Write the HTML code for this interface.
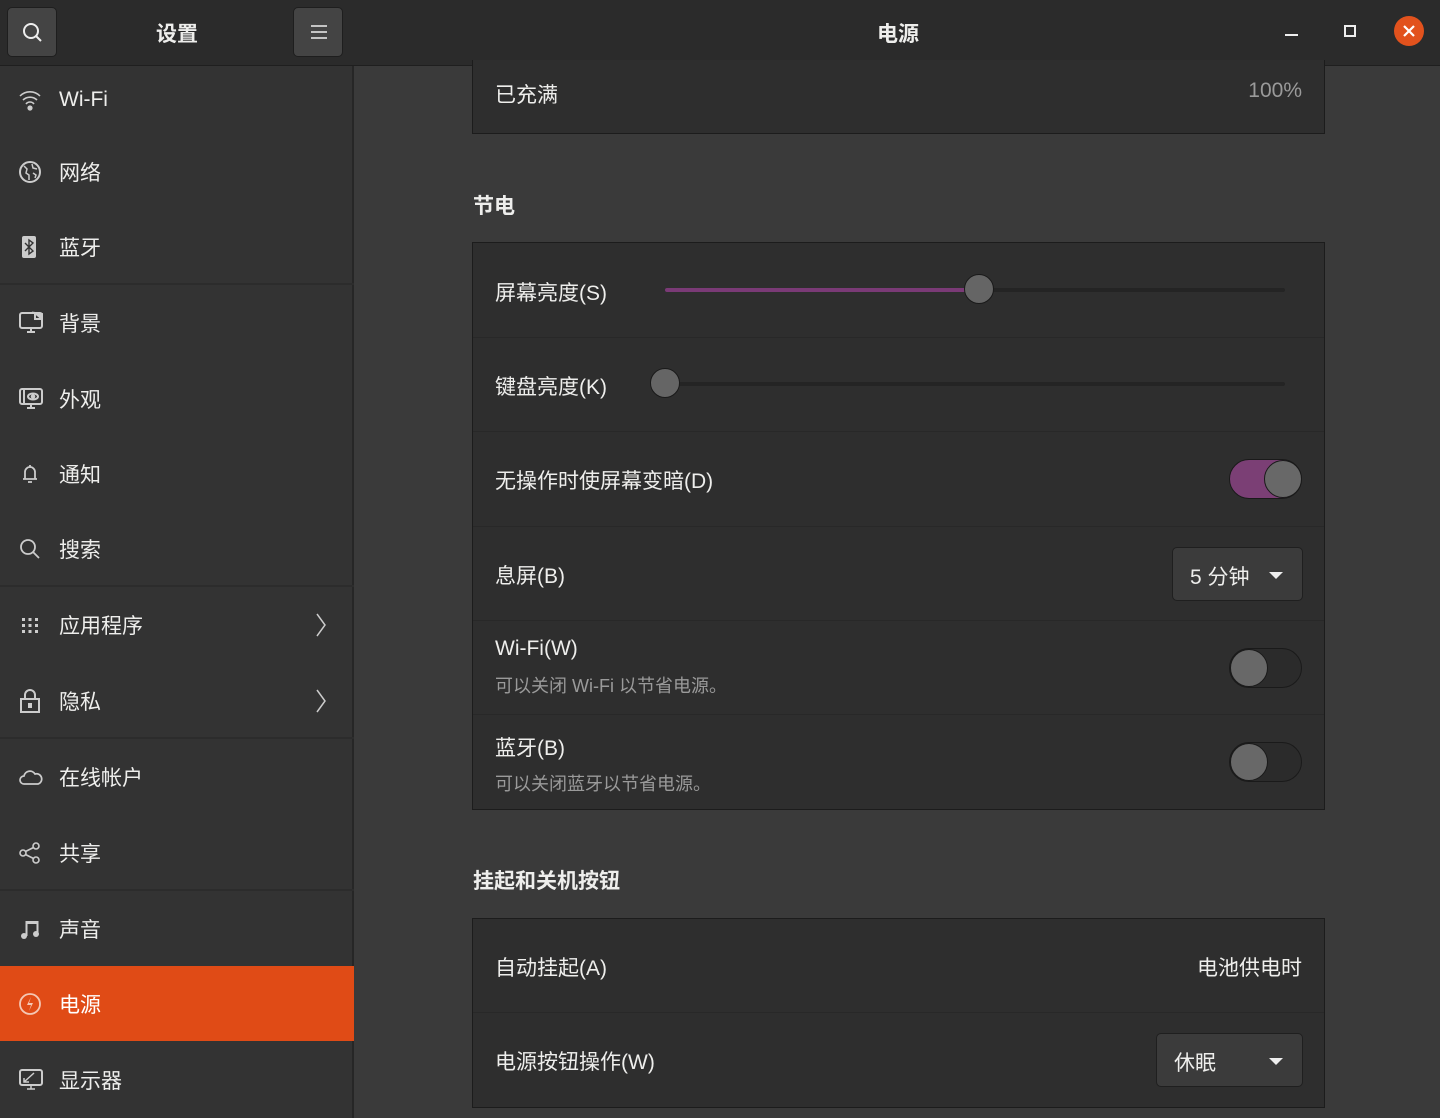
<!DOCTYPE html>
<html><head><meta charset="utf-8"><style>
*{margin:0;padding:0;box-sizing:border-box}
body{width:1440px;height:1118px;overflow:hidden;background:#3a3a3a;font-family:"Liberation Sans","Noto Sans CJK SC",sans-serif;color:#eeeeec;position:relative}
.a{position:absolute}
.hdr{left:0;top:0;width:1440px;height:66px;background:#2b2b2b;border-bottom:1px solid #1f1f1f}
.btn{background:#444;border:1px solid #1e1e1e;border-radius:5px;width:50px;height:50px;top:7px}
.side{left:0;top:66px;width:354px;height:1052px;background:#333333;border-right:2px solid #262626}
.it{left:0;width:354px;display:flex;align-items:center;font-size:21px}
.it svg{position:absolute;left:18px}
.it span{position:absolute;left:59px}
.sep{left:0;width:354px;height:2px;background:#2c2c2c}
.box{left:472px;width:853px;background:#2e2e2e;border:1px solid #1c1c1c}
.row{left:0;width:851px;border-bottom:1px solid #282828;font-size:21px}
.lbl{position:absolute;left:22px}
.h{font-size:21px;font-weight:bold;left:473px}
.sw{width:73px;height:40px;border-radius:20px;border:1px solid #1a1a1a;background:#2b2b2b}
.knob{width:38px;height:38px;border-radius:50%;background:#686868;border:1px solid #1a1a1a;top:0}
.dd{background:#3b3b3b;border:1px solid #1f1f1f;border-radius:5px;font-size:21px}
.tri{width:0;height:0;border-left:7px solid transparent;border-right:7px solid transparent;border-top:7px solid #eee}
</style></head><body>
<div class="a hdr"></div>
<div class="a btn" style="left:7px"><svg class="a" style="left:13px;top:13px" width="24" height="24" viewBox="0 0 24 24" fill="none" stroke="#eee" stroke-width="2"><circle cx="10" cy="10" r="7"/><path d="M15 15l5 5"/></svg></div>
<div class="a" style="left:0;width:354px;top:18px;text-align:center;font-size:21px;font-weight:bold">设置</div>
<div class="a btn" style="left:293px"><svg class="a" style="left:16px;top:16px" width="18" height="16" viewBox="0 0 18 16" stroke="#eee" stroke-width="1.6"><path d="M1 2h16M1 8h16M1 14h16"/></svg></div>
<div class="a" style="left:356px;width:1084px;top:18px;text-align:center;font-size:21px;font-weight:bold">电源</div>
<div class="a" style="left:1285px;top:34px;width:13px;height:2px;background:#eee"></div>
<div class="a" style="left:1344px;top:25px;width:12px;height:12px;border:2px solid #eee"></div>
<div class="a" style="left:1394px;top:16px;width:30px;height:30px;border-radius:50%;background:#e2521d"><svg class="a" style="left:8px;top:8px" width="14" height="14" stroke="#fff" stroke-width="2.2"><path d="M2 2l10 10M12 2L2 12"/></svg></div>

<div class="a side"></div>
<div class="a it" style="top:66px;height:67px"><svg width="24" height="24" viewBox="0 0 24 24" fill="none" stroke="#ccc" stroke-width="1.6"><path d="M2 8a14 14 0 0 1 20 0M5 12a10 10 0 0 1 14 0M8 16a5 5 0 0 1 8 0"/><circle cx="12" cy="20" r="1.8" fill="#ccc"/></svg><span>Wi-Fi</span></div>
<div class="a it" style="top:133px;height:77px"><svg width="24" height="24" viewBox="0 0 24 24" fill="none" stroke="#ccc" stroke-width="2"><circle cx="12" cy="12" r="10"/><path d="M6 6l3 3-1 4 3 2v5M14 4l1 4 4 1M15 13l3 2-1 3" stroke-width="1.5"/></svg><span>网络</span></div>
<div class="a it" style="top:210px;height:74px"><svg width="24" height="24" viewBox="0 0 24 24"><rect x="4" y="1" width="14" height="22" rx="2" fill="#ccc"/><path d="M7 8l8 8-4 3V5l4 3-8 8" fill="none" stroke="#333" stroke-width="1.4"/></svg><span>蓝牙</span></div>
<div class="a sep" style="top:283px"></div>
<div class="a it" style="top:285px;height:76px"><svg width="26" height="24" viewBox="0 0 26 24" fill="none" stroke="#ccc" stroke-width="2"><rect x="2" y="2" width="22" height="15" rx="2"/><path d="M9 21h8M13 17v4M17 2v6h7" /><path d="M17 2l7 6v-5z" fill="#ccc"/></svg><span>背景</span></div>
<div class="a it" style="top:361px;height:76px"><svg width="26" height="24" viewBox="0 0 26 24" fill="none" stroke="#ccc" stroke-width="2"><rect x="2" y="2" width="22" height="15" rx="2"/><path d="M9 21h8M13 17v4M6 3v13"/><ellipse cx="15" cy="9.5" rx="5" ry="3"/><circle cx="15" cy="9.5" r="1.3" fill="#ccc"/></svg><span>外观</span></div>
<div class="a it" style="top:437px;height:74px"><svg width="24" height="24" viewBox="0 0 24 24" fill="none" stroke="#ccc" stroke-width="1.8"><path d="M7 17V10a5 5 0 0 1 10 0v7H5h14M10 20h4M12 3v2"/></svg><span>通知</span></div>
<div class="a it" style="top:511px;height:75px"><svg width="24" height="24" viewBox="0 0 24 24" fill="none" stroke="#ccc" stroke-width="1.8"><circle cx="10" cy="10" r="7"/><path d="M15 15l6 6"/></svg><span>搜索</span></div>
<div class="a sep" style="top:585px"></div>
<div class="a it" style="top:587px;height:76px"><svg width="24" height="24" viewBox="0 0 24 24" fill="#ccc"><rect x="4" y="5" width="3" height="3"/><rect x="10.5" y="5" width="3" height="3"/><rect x="17" y="5" width="3" height="3"/><rect x="4" y="11" width="3" height="3"/><rect x="10.5" y="11" width="3" height="3"/><rect x="17" y="11" width="3" height="3"/><rect x="4" y="17" width="3" height="3"/><rect x="10.5" y="17" width="3" height="3"/><rect x="17" y="17" width="3" height="3"/></svg><span>应用程序</span><svg style="left:314px" width="14" height="26" viewBox="0 0 14 26" fill="none" stroke="#ccc" stroke-width="1.5"><path d="M3 2l8 11-8 11"/></svg></div>
<div class="a it" style="top:663px;height:75px"><svg width="24" height="26" viewBox="0 0 24 26" fill="none" stroke="#ccc" stroke-width="2"><rect x="3" y="11" width="18" height="13"/><path d="M7 11V7a5 5 0 0 1 10 0v4"/><rect x="11" y="16" width="2" height="3" fill="#ccc"/></svg><span>隐私</span><svg style="left:314px" width="14" height="26" viewBox="0 0 14 26" fill="none" stroke="#ccc" stroke-width="1.5"><path d="M3 2l8 11-8 11"/></svg></div>
<div class="a sep" style="top:737px"></div>
<div class="a it" style="top:739px;height:76px"><svg width="26" height="24" viewBox="0 0 26 24" fill="none" stroke="#ccc" stroke-width="1.7"><path d="M6 19a4 4 0 0 1 0-8 6 6 0 0 1 11-2 5 5 0 0 1 3 10z"/></svg><span>在线帐户</span></div>
<div class="a it" style="top:815px;height:75px"><svg width="24" height="24" viewBox="0 0 24 24" fill="none" stroke="#ccc" stroke-width="1.6"><circle cx="5" cy="12" r="3"/><circle cx="18" cy="5" r="3"/><circle cx="18" cy="19" r="3"/><path d="M7.5 10.5l8-4M7.5 13.5l8 4"/></svg><span>共享</span></div>
<div class="a sep" style="top:889px"></div>
<div class="a it" style="top:891px;height:75px"><svg width="24" height="24" viewBox="0 0 24 24" fill="#ccc"><circle cx="6" cy="19" r="3"/><circle cx="18" cy="17" r="3"/><path d="M7.5 19V4h13v13h-2V7h-9v12z"/></svg><span>声音</span></div>
<div class="a it" style="top:966px;height:75px;background:#e04b16"><svg width="24" height="24" viewBox="0 0 24 24" fill="none" stroke="#f4c7b4" stroke-width="1.8"><circle cx="12" cy="12" r="10"/><path d="M13 5l-4 8h4l-2 6 4-8h-4z" fill="#f4c7b4" stroke="none"/></svg><span style="color:#fff">电源</span></div>
<div class="a it" style="top:1041px;height:77px"><svg width="26" height="24" viewBox="0 0 26 24" fill="none" stroke="#ccc" stroke-width="2"><rect x="2" y="2" width="22" height="15" rx="2"/><path d="M9 21h8M13 17v4M6 14l10-9M6 10v4h5" stroke-width="1.5"/></svg><span>显示器</span></div>

<div class="a box" style="top:60px;height:74px;border-top:none"><div class="lbl a" style="top:19px;font-size:21px">已充满</div><div class="a" style="right:22px;top:19px;font-size:21px;color:#9a9a9a">100%</div></div>

<div class="a h" style="top:190px">节电</div>
<div class="a box" style="top:242px;height:568px">
 <div class="a row" style="top:0;height:95px"><div class="lbl" style="top:34px">屏幕亮度(S)</div>
  <div class="a" style="left:192px;top:45px;width:620px;height:4px;border-radius:2px;background:#242424"></div>
  <div class="a" style="left:192px;top:45px;width:314px;height:4px;border-radius:2px;background:#7a3a76"></div>
  <div class="a" style="left:491px;top:31px;width:30px;height:30px;border-radius:50%;background:#656565;border:1px solid #1a1a1a"></div></div>
 <div class="a row" style="top:95px;height:94px"><div class="lbl" style="top:33px">键盘亮度(K)</div>
  <div class="a" style="left:192px;top:44px;width:620px;height:4px;border-radius:2px;background:#242424"></div>
  <div class="a" style="left:177px;top:30px;width:30px;height:30px;border-radius:50%;background:#656565;border:1px solid #1a1a1a"></div></div>
 <div class="a row" style="top:189px;height:95px"><div class="lbl" style="top:33px">无操作时使屏幕变暗(D)</div>
  <div class="a sw" style="left:756px;top:27px;background:#7b3f75"><div class="a knob" style="left:34px"></div></div></div>
 <div class="a row" style="top:284px;height:94px"><div class="lbl" style="top:33px">息屏(B)</div>
  <div class="a dd" style="left:699px;top:20px;width:131px;height:54px"><div class="a" style="left:17px;top:13px">5 分钟</div><div class="a tri" style="left:96px;top:24px"></div></div></div>
 <div class="a row" style="top:378px;height:94px"><div class="lbl" style="top:16px">Wi-Fi(W)</div><div class="lbl" style="top:51px;font-size:18px;color:#9a9a9a">可以关闭 Wi-Fi 以节省电源。</div>
  <div class="a sw" style="left:756px;top:27px"><div class="a knob" style="left:0"></div></div></div>
 <div class="a row" style="top:472px;height:94px;border-bottom:none"><div class="lbl" style="top:17px">蓝牙(B)</div><div class="lbl" style="top:55px;font-size:18px;color:#9a9a9a">可以关闭蓝牙以节省电源。</div>
  <div class="a sw" style="left:756px;top:27px"><div class="a knob" style="left:0"></div></div></div>
</div>

<div class="a h" style="top:865px">挂起和关机按钮</div>
<div class="a box" style="top:918px;height:190px">
 <div class="a row" style="top:0;height:94px"><div class="lbl" style="top:33px">自动挂起(A)</div><div class="a" style="right:22px;top:33px">电池供电时</div></div>
 <div class="a row" style="top:94px;height:94px;border-bottom:none"><div class="lbl" style="top:33px">电源按钮操作(W)</div>
  <div class="a dd" style="left:683px;top:20px;width:147px;height:54px"><div class="a" style="left:17px;top:13px">休眠</div><div class="a tri" style="left:112px;top:24px"></div></div></div>
</div>
</body></html>
